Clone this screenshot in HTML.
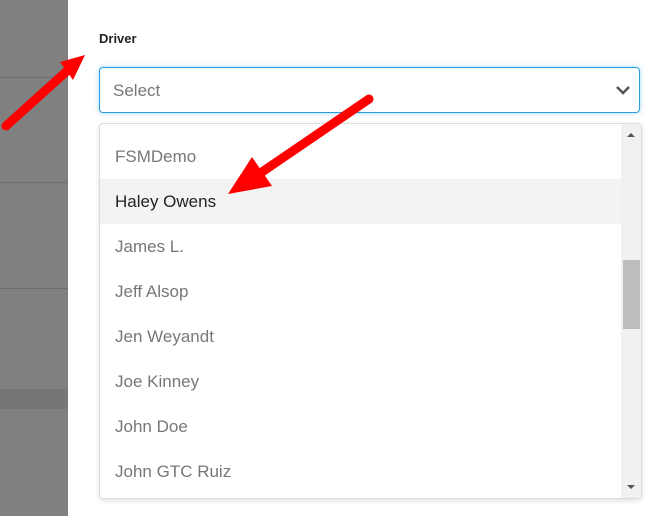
<!DOCTYPE html>
<html><head><style>
body{margin:0;width:661px;height:516px;overflow:hidden;background:#fff;font-family:"Liberation Sans",Arial,sans-serif;position:relative}
.left{position:absolute;left:0;top:0;width:68px;height:516px;background:#808080}
.ln{position:absolute;left:0;width:68px;height:1px;background:#6e6e6e}
.lbl{position:absolute;left:99px;top:31px;font-size:13px;font-weight:bold;color:#222}
.sel{position:absolute;left:99px;top:67px;width:539px;height:44px;border:1px solid #2a9de0;border-radius:4px;box-shadow:0 0 5px rgba(60,170,240,.5);box-sizing:content-box}
.sel span{position:absolute;left:13px;top:13px;font-size:17px;color:#777}
.dd{position:absolute;left:99px;top:123px;width:541px;height:374px;border:1px solid #ddd;border-radius:4px;box-shadow:0 2px 6px rgba(0,0,0,.12);overflow:hidden;background:#fff}
.it{position:absolute;left:0;width:521px;height:45px;font-size:17px;color:#777;line-height:45px;padding-left:15px;box-sizing:border-box}
.sb{position:absolute;left:521px;top:0;width:20px;height:374px;background:#f1f1f1}
</style></head><body>
<div class="left"></div>
<div class="ln" style="top:77px"></div>
<div class="ln" style="top:182px"></div>
<div class="ln" style="top:288px"></div>
<div style="position:absolute;left:0;top:389px;width:68px;height:20px;background:#767676"></div>
<div class="lbl">Driver</div>
<div class="sel"><span>Select</span>
<svg style="position:absolute;right:8px;top:15px" width="16" height="14" viewBox="0 0 16 14"><path d="M2 4 L8 10 L14 4" stroke="#555" stroke-width="2.5" fill="none"/></svg></div>
<div class="dd">
<div class="it" style="top:10px">FSMDemo</div>
<div class="it" style="top:55px;background:#f3f3f3;color:#222">Haley Owens</div>
<div class="it" style="top:100px">James L.</div>
<div class="it" style="top:145px">Jeff Alsop</div>
<div class="it" style="top:190px">Jen Weyandt</div>
<div class="it" style="top:235px">Joe Kinney</div>
<div class="it" style="top:280px">John Doe</div>
<div class="it" style="top:325px">John GTC Ruiz</div>
<div class="sb">
<svg style="position:absolute;left:5px;top:8px" width="10" height="6"><path d="M1 5L5 1L9 5Z" fill="#555"/></svg>
<div style="position:absolute;left:2px;top:136px;width:17px;height:69px;background:#bdbdbd"></div>
<svg style="position:absolute;left:5px;top:360px" width="10" height="6"><path d="M1 1L5 5L9 1Z" fill="#555"/></svg>
</div></div>
<svg style="position:absolute;left:0;top:0" width="661" height="516">
<line x1="6" y1="126" x2="67" y2="71" stroke="#f00" stroke-width="9" stroke-linecap="round"/>
<polygon points="85,55 60,62 73,80" fill="#f00"/>
<line x1="369" y1="99" x2="262" y2="172" stroke="#f00" stroke-width="9" stroke-linecap="round"/>
<polygon points="228,194 252,157 272,186" fill="#f00"/>
</svg>
</body></html>
